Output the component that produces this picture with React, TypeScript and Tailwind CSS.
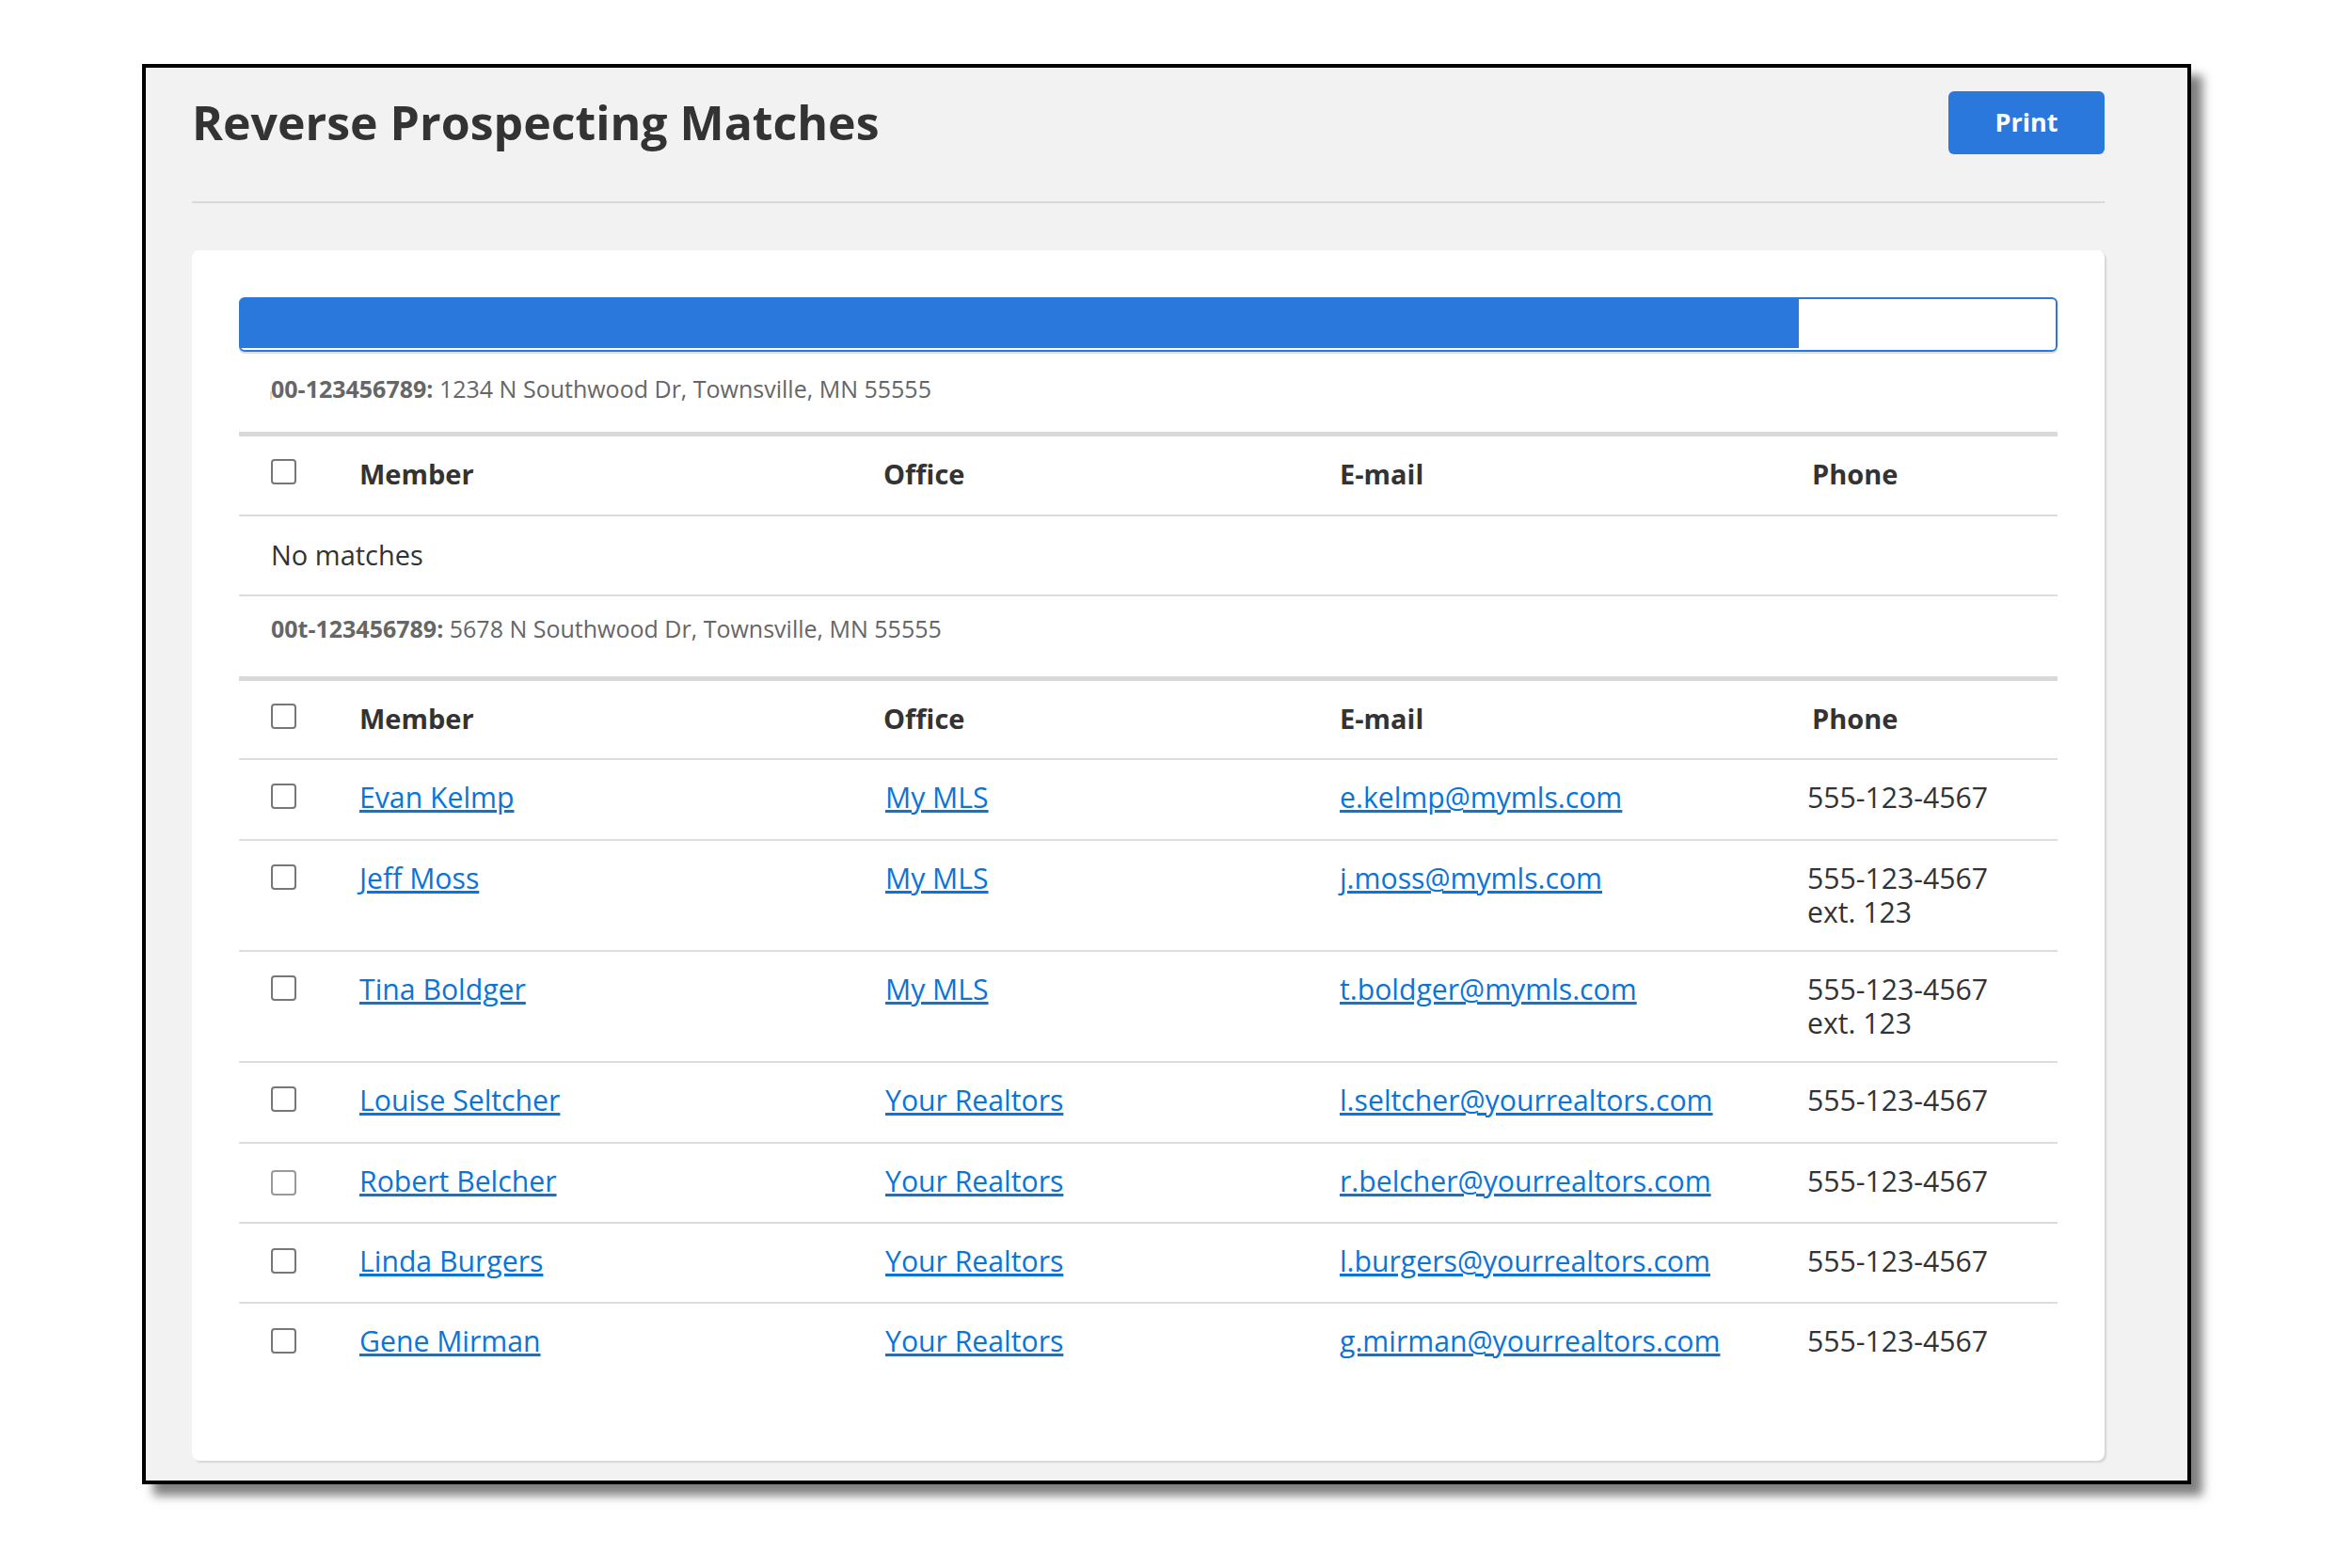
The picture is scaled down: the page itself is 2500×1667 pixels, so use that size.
import React from "react";

type Row = {
  name: string;
  office: string;
  email: string;
  ext?: boolean;
  tall?: boolean;
  box?: string;
};

const ROWS: Row[] = [
  { name: "Evan Kelmp", office: "My MLS", email: "e.kelmp@mymls.com", tall: true },
  { name: "Jeff Moss", office: "My MLS", email: "j.moss@mymls.com", ext: true },
  { name: "Tina Boldger", office: "My MLS", email: "t.boldger@mymls.com", ext: true },
  { name: "Louise Seltcher", office: "Your Realtors", email: "l.seltcher@yourrealtors.com", tall: true },
  { name: "Robert Belcher", office: "Your Realtors", email: "r.belcher@yourrealtors.com", box: "mt-[3px] border-[#999]" },
  { name: "Linda Burgers", office: "Your Realtors", email: "l.burgers@yourrealtors.com", box: "mt-[1px]" },
  { name: "Gene Mirman", office: "Your Realtors", email: "g.mirman@yourrealtors.com", box: "mt-[1px]" },
];

function Check({ className = "" }: { className?: string }) {
  return (
    <input
      type="checkbox"
      className={`block appearance-none w-[27px] h-[27px] rounded-[4px] border-2 border-[#777] bg-white ${className}`}
    />
  );
}

function Label({
  id,
  address,
  mark,
  className,
}: {
  id: string;
  address: string;
  mark?: boolean;
  className: string;
}) {
  return (
    <div className={`h-[85px] pl-[34px] flex items-center text-[25px] text-[#666] ${className}`}>
      <p>
        {mark && <span className="inline-block w-[2px] h-[9px] -ml-[1px] -mr-[1px] align-[-2px] bg-[#f7d6ac]" />}
        <span className="font-bold">{id}:</span> {address}
      </p>
    </div>
  );
}

function HeaderRow() {
  return (
    <tr className="h-[86px] border-t-[5px] border-b-2 border-[#d9d9d9] border-b-[#ddd] text-left text-[29px]">
      <th className="pl-[34px] align-top pt-[24px]">
        <Check />
      </th>
      <th className="align-top pt-[18px] font-bold">Member</th>
      <th className="align-top pt-[18px] font-bold">Office</th>
      <th className="align-top pt-[18px] font-bold">E-mail</th>
      <th className="align-top pt-[18px] pl-[5px] font-bold">Phone</th>
    </tr>
  );
}

function Cols() {
  return (
    <colgroup>
      <col className="w-[128px]" />
      <col className="w-[557px]" />
      <col className="w-[485px]" />
      <col className="w-[497px]" />
      <col />
    </colgroup>
  );
}

function Linked({ children }: { children: string }) {
  return (
    <a href="#" className="text-[#0a74d8] underline">
      {children}
    </a>
  );
}

export default function App() {
  return (
    <div className="bg-white min-h-[1667px] pt-[68px] pl-[151px] font-['Open_Sans',sans-serif] text-[#333]">
      <div className="w-[2178px] h-[1510px] border-[4px] border-black bg-[#f2f2f2] pl-[49px] pr-[88px] shadow-[12px_12px_10px_rgba(0,0,0,0.5)]">
        <div className="flex items-center justify-between pt-[25px] pb-[50px] border-b-2 border-[#d9d9d9]">
          <h1 className="text-[50px] leading-[67px] font-bold">Reverse Prospecting Matches</h1>
          <button className="w-[166px] h-[67px] rounded-[6px] bg-[#2b78dd] text-white text-[27px] font-bold">
            Print
          </button>
        </div>

        <div className="mt-[50px] h-[1287px] rounded-[8px] bg-white p-[50px] shadow-[2px_2px_2px_rgba(0,0,0,0.12)]">
          <div className="h-[58px] rounded-[6px] border-2 border-[#2b78dd] pb-[2px] shadow-[0_2px_0_#ddd]">
            <div className="h-full w-[85.85%] bg-[#2b78dd]" />
          </div>

          <Label mark id="00-123456789" address="1234 N Southwood Dr, Townsville, MN 55555" className="pb-[5px]" />
          <table className="w-full table-fixed border-collapse">
            <Cols />
            <tbody>
              <HeaderRow />
              <tr className="h-[85px] border-b-2 border-[#ddd] text-[29px]">
                <td colSpan={5} className="pl-[34px]">
                  No matches
                </td>
              </tr>
            </tbody>
          </table>

          <Label id="00t-123456789" address="5678 N Southwood Dr, Townsville, MN 55555" className="pb-[14px]" />
          <table className="w-full table-fixed border-collapse">
            <Cols />
            <tbody>
              <HeaderRow />
              {ROWS.map((r, i) => (
                <tr
                  key={r.email}
                  className={`text-[30.2px] leading-[36px] ${
                    i < ROWS.length - 1 ? "border-b-2 border-[#ddd]" : ""
                  }`}
                >
                  <td className="pl-[34px] align-top pt-[25px]">
                    <Check className={r.box} />
                  </td>
                  <td className={`align-top pt-[22px] ${r.tall ? "pb-[26px]" : "pb-[25px]"}`}>
                    <Linked>{r.name}</Linked>
                  </td>
                  <td className="align-top pt-[22px] pl-[2px]">
                    <Linked>{r.office}</Linked>
                  </td>
                  <td className="align-top pt-[22px]">
                    <Linked>{r.email}</Linked>
                  </td>
                  <td className="align-top pt-[22px] pb-[22px]">
                    555-123-4567
                    {r.ext && (
                      <>
                        <br />
                        ext. 123
                      </>
                    )}
                  </td>
                </tr>
              ))}
            </tbody>
          </table>
        </div>
      </div>
    </div>
  );
}
